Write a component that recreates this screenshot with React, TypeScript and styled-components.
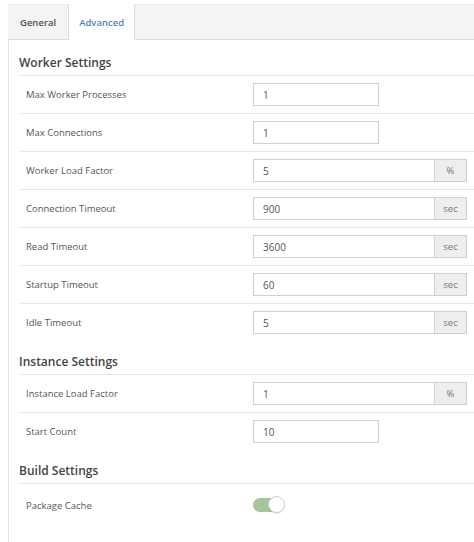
import React from "react";
import styled, { createGlobalStyle } from "styled-components";

const GlobalStyle = createGlobalStyle`
  body {
    margin: 0;
    background: #fff;
    font-family: "Open Sans", "Liberation Sans", sans-serif;
  }
`;

interface Field {
  label: string;
  value?: string;
  addon?: string;
  toggle?: boolean;
}

interface Section {
  title: string;
  fields: Field[];
}

const sections: Section[] = [
  {
    title: "Worker Settings",
    fields: [
      { label: "Max Worker Processes", value: "1" },
      { label: "Max Connections", value: "1" },
      { label: "Worker Load Factor", value: "5", addon: "%" },
      { label: "Connection Timeout", value: "900", addon: "sec" },
      { label: "Read Timeout", value: "3600", addon: "sec" },
      { label: "Startup Timeout", value: "60", addon: "sec" },
      { label: "Idle Timeout", value: "5", addon: "sec" },
    ],
  },
  {
    title: "Instance Settings",
    fields: [
      { label: "Instance Load Factor", value: "1", addon: "%" },
      { label: "Start Count", value: "10" },
    ],
  },
  {
    title: "Build Settings",
    fields: [{ label: "Package Cache", toggle: true }],
  },
];

function App() {
  return (
    <>
      <GlobalStyle />
      <Panel>
        <TabBar>
          <Tab>General</Tab>
          <Tab $active>Advanced</Tab>
        </TabBar>
        <Body>
          {sections.map((s) => (
            <SectionBlock key={s.title}>
              <Heading>{s.title}</Heading>
              {s.fields.map((f) => (
                <Row key={f.label}>
                  <Label>{f.label}</Label>
                  {f.toggle ? (
                    <Toggle>
                      <Knob />
                    </Toggle>
                  ) : f.addon ? (
                    <Group>
                      <Input $grow defaultValue={f.value} />
                      <Addon>{f.addon}</Addon>
                    </Group>
                  ) : (
                    <Input defaultValue={f.value} />
                  )}
                </Row>
              ))}
            </SectionBlock>
          ))}
        </Body>
      </Panel>
    </>
  );
}

const Panel = styled.div`
  margin: 4px 0 0 8px;
  width: 466px;
`;

const TabBar = styled.div`
  display: flex;
  height: 34px;
  background: #f4f4f4;
  border-top: 1px solid #ececec;
  border-bottom: 1px solid #dcdcdc;
`;

const Tab = styled.div<{ $active?: boolean }>`
  display: flex;
  align-items: center;
  margin-top: -1px;
  margin-bottom: -1px;
  padding: 0 ${(p) => (p.$active ? "10px" : "11px")};
  font-size: 9.5px;
  font-weight: 600;
  color: ${(p) => (p.$active ? "#4f7fba" : "#505050")};
  background: ${(p) => (p.$active ? "#fff" : "transparent")};
  border-left: 1px solid ${(p) => (p.$active ? "#dcdcdc" : "transparent")};
  border-right: 1px solid ${(p) => (p.$active ? "#dcdcdc" : "transparent")};
`;

const Body = styled.div`
  border-left: 1px solid #e3e3e3;
  padding: 14px 0 30px 10px;
`;

const SectionBlock = styled.div`
  & + & {
    margin-top: 12px;
  }
`;

const Heading = styled.div`
  font-size: 12px;
  font-weight: 600;
  color: #444;
  line-height: 18px;
  padding-bottom: 3px;
  border-bottom: 1px solid #e6e6e6;
`;

const Row = styled.div`
  display: flex;
  align-items: center;
  padding: 7px 0 7px 7px;
  border-bottom: 1px solid #e6e6e6;

  &:last-child {
    border-bottom: none;
  }
`;

const Label = styled.div`
  width: 227px;
  flex-shrink: 0;
  font-size: 9.5px;
  color: #555;
`;

const Group = styled.div`
  display: flex;
  width: 214px;
`;

const Input = styled.input<{ $grow?: boolean }>`
  box-sizing: border-box;
  height: 23px;
  width: ${(p) => (p.$grow ? "auto" : "126px")};
  flex: ${(p) => (p.$grow ? "1" : "none")};
  min-width: 0;
  padding: 0 9px;
  border: 1px solid #d0d0d0;
  font-family: inherit;
  font-size: 10px;
  color: #555;
  outline: none;
`;

const Addon = styled.div`
  box-sizing: border-box;
  width: 32px;
  height: 23px;
  display: flex;
  align-items: center;
  justify-content: center;
  background: #eee;
  border: 1px solid #d0d0d0;
  border-left: none;
  font-size: 9.5px;
  color: #777;
`;

const Toggle = styled.div`
  position: relative;
  width: 30px;
  height: 14px;
  border-radius: 7px;
  background: #a6c598;
  margin: 7px 0;
`;

const Knob = styled.div`
  position: absolute;
  right: -2px;
  top: -2px;
  width: 17px;
  height: 17px;
  box-sizing: border-box;
  border-radius: 50%;
  background: #fff;
  border: 1px solid #cfcfcf;
  box-shadow: 0 1px 1px rgba(0, 0, 0, 0.12);
`;

export default App;
